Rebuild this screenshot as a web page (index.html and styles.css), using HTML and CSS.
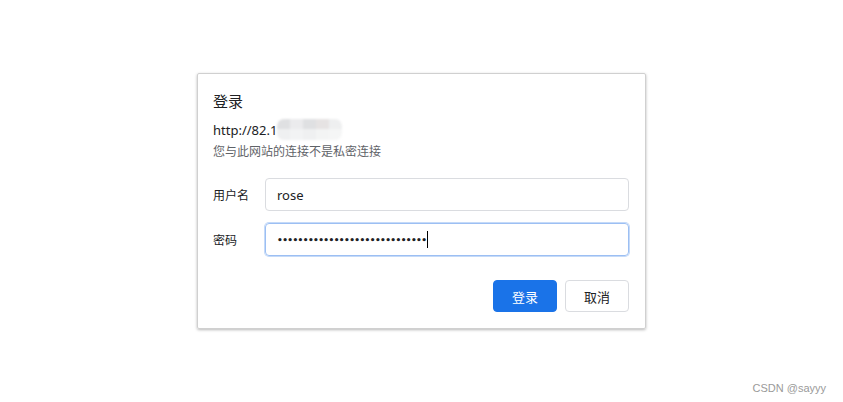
FILE: index.html
```html
<html>
  <head>
    <title>登录</title>
    <link rel="stylesheet" href="styles.css">
  </head>
  <body>
    <div class="dialog">
      <div class="title">登录</div>
      <div class="origin">http://82.1<span class="blur"><i></i><i></i><i></i><i></i><i></i></span></div>
      <div class="warn">您与此网站的连接不是私密连接</div>

      <div class="row">
        <label>用户名</label>
        <div class="field">rose</div>
      </div>
      <div class="row">
        <label>密码</label>
        <div class="field focused"><span class="dots">•••••••••••••••••••••••••••••</span><span class="caret"></span></div>
      </div>

      <div class="buttons">
        <div class="btn primary">登录</div>
        <div class="btn">取消</div>
      </div>
    </div>

    <div class="mark">CSDN @sayyy</div>
  </body>
</html>
```

FILE: styles.css
```css
body {
  margin: 0;
  background: #fff;
  font-family: "Noto Sans", "Noto Sans CJK SC", sans-serif;
  color: #202124;
}
.dialog {
  box-sizing: border-box;
  width: 449px;
  margin: 73px 0 0 197px;
  padding: 17px 16px 16px 15px;
  border: 1px solid #d0d0d0;
  border-radius: 2px;
  box-shadow: 0 1px 3px rgba(0, 0, 0, 0.28);
}
.title {
  font-size: 15px;
  line-height: 20px;
}
.origin {
  margin-top: 9px;
  font-size: 13px;
  line-height: 20px;
  height: 20px;
}
.blur {
  display: inline-flex;
  vertical-align: top;
  width: 65px;
  height: 21px;
  margin-top: -1px;
  border-radius: 7px;
  overflow: hidden;
  filter: blur(0.8px);
}
.blur i {
  flex: 1;
  background: linear-gradient(#dfe0e2 50%, #eff0f1 50%);
}
.blur i:nth-child(2) { background: linear-gradient(#ebebed 50%, #f2f3f4 50%); }
.blur i:nth-child(4) { background: linear-gradient(#e6e3e3 50%, #f3f4f4 50%); }
.blur i:nth-child(5) { background: linear-gradient(#eeeff0 50%, #f5f6f6 50%); }
.warn {
  margin-top: 3px;
  font-size: 12px;
  line-height: 18px;
  color: #5f6368;
}
.row {
  display: flex;
  align-items: center;
  margin-top: 12px;
}
.warn + .row {
  margin-top: 17px;
}
.row label {
  width: 52px;
  font-size: 12px;
}
.field {
  box-sizing: border-box;
  flex: 1;
  height: 33px;
  display: flex;
  align-items: center;
  padding-left: 11px;
  border: 1px solid #dadce0;
  border-radius: 4px;
  font-size: 13px;
}
.field.focused {
  border-color: #9cbff3;
  box-shadow: 0 0 0 1px #c5daf8;
}
.dots {
  font-family: "DejaVu Sans", sans-serif;
  font-size: 9px;
  font-weight: bold;
  letter-spacing: -0.6px;
  color: #202124;
}
.caret {
  width: 1px;
  height: 17px;
  margin-left: 1px;
  background: #000;
}
.buttons {
  display: flex;
  justify-content: flex-end;
  gap: 8px;
  margin-top: 24px;
}
.btn {
  box-sizing: border-box;
  width: 64px;
  height: 32px;
  display: flex;
  align-items: center;
  justify-content: center;
  border: 1px solid #dadce0;
  border-radius: 4px;
  font-size: 13px;
  color: #202124;
}
.btn.primary {
  background: #1a73e8;
  border-color: #1a73e8;
  color: #fff;
}
.mark {
  position: absolute;
  right: 17px;
  bottom: 8px;
  font-family: "Liberation Sans", sans-serif;
  font-size: 11px;
  color: #9a9a9a;
}
```
